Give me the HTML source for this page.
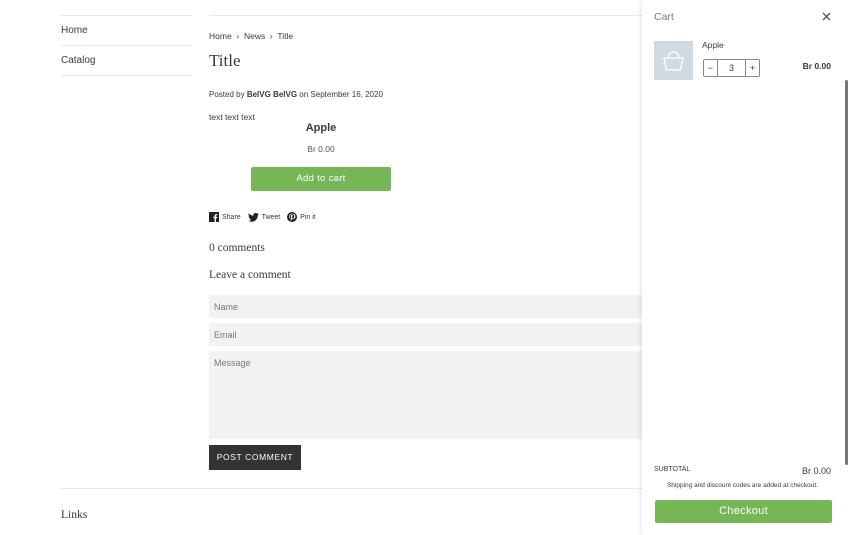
<!DOCTYPE html>
<html><head><meta charset="utf-8"><style>
*{box-sizing:border-box;margin:0;padding:0}
body{width:850px;height:535px;overflow:hidden;background:#fff;font-family:"Liberation Sans",sans-serif;color:#3a3a3a;position:relative}
.a{position:absolute}
.line{position:absolute;height:1px;background:#e8e8e8}
.serif{font-family:"Liberation Serif",serif}
.field{position:absolute;left:209px;width:433px;background:#f2f2f2;font-size:9px;color:#777;padding:7px 5px}
</style></head><body>
<div class="line" style="left:61px;top:15px;width:131px"></div>
<div class="line" style="left:209px;top:15px;width:433px"></div>
<div class="a" style="left:61px;top:25px;font-size:10px">Home</div>
<div class="line" style="left:61px;top:45px;width:131px"></div>
<div class="a" style="left:61px;top:55px;font-size:10px">Catalog</div>
<div class="line" style="left:61px;top:75px;width:131px"></div>

<div class="a" style="left:209px;top:31px;font-size:8.5px">Home &nbsp;›&nbsp; News &nbsp;›&nbsp; Title</div>
<div class="a serif" style="left:209px;top:51px;font-size:17px">Title</div>
<div class="a" style="left:209px;top:90px;font-size:8px">Posted by <b>BelVG BelVG</b> on September 16, 2020</div>
<div class="a" style="left:209px;top:112px;font-size:8.5px">text text text</div>
<div class="a" style="left:251px;top:122px;width:140px;text-align:center;font-size:11px;font-weight:bold">Apple</div>
<div class="a" style="left:251px;top:144px;width:140px;text-align:center;font-size:8.5px;color:#555">Br 0.00</div>
<div class="a" style="left:251px;top:167px;width:140px;height:24px;background:#77b657;border-radius:2px;color:#fff;font-size:9.5px;letter-spacing:.3px;text-align:center;line-height:24px">Add to cart</div>

<div class="a" style="left:209px;top:212px;font-size:7px;display:flex;align-items:center;gap:3px">
<svg width="10" height="10" viewBox="0 0 10 10"><rect width="10" height="10" fill="#222"/><path d="M7 10V6.2h1.2l.2-1.4H7V4c0-.4.1-.7.7-.7h.7V2.1C8.2 2 7.8 2 7.3 2 6.3 2 5.6 2.6 5.6 3.7v1.1H4.4v1.4h1.2V10z" fill="#fff"/></svg>Share&nbsp;&nbsp;
<svg width="11" height="9" viewBox="0 0 24 20"><path d="M24 2.4a10 10 0 0 1-2.8.8A5 5 0 0 0 23.3.4a10 10 0 0 1-3.1 1.2A4.9 4.9 0 0 0 11.8 6 14 14 0 0 1 1.7.9a4.9 4.9 0 0 0 1.5 6.6 4.9 4.9 0 0 1-2.2-.6A4.9 4.9 0 0 0 4.9 11.7a5 5 0 0 1-2.2.1 4.9 4.9 0 0 0 4.6 3.4A9.9 9.9 0 0 1 0 17.3 14 14 0 0 0 7.5 19.5c9.1 0 14-7.5 14-14v-.6A10 10 0 0 0 24 2.4z" fill="#222"/></svg>Tweet&nbsp;&nbsp;
<svg width="10" height="10" viewBox="0 0 10 10"><circle cx="5" cy="5" r="5" fill="#222"/><path d="M4.4 8.8 5 6.4c.3.4.7.6 1.2.6 1.5 0 2.3-1.4 2.3-2.8C8.5 2.8 7.3 1.6 5.4 1.6 3.2 1.6 2.1 3.1 2.1 4.5c0 .8.3 1.5 1 1.7l.2-.6c-.4-.4-.5-.8-.5-1.2 0-1.3 1-2.3 2.5-2.3 1.3 0 2 .8 2 1.9 0 1.4-.6 2.4-1.5 2.4-.5 0-.8-.4-.7-.9l.5-1.7c.1-.6-.2-1-.7-1-.6 0-1 .6-1 1.3 0 .5.2.8.2.8L3.6 8z" fill="#fff"/></svg>Pin it</div>

<div class="a serif" style="left:209px;top:242px;font-size:11.5px">0 comments</div>
<div class="a serif" style="left:209px;top:269px;font-size:11.5px">Leave a comment</div>
<div class="field" style="top:295px;height:23px">Name</div>
<div class="field" style="top:323px;height:23px">Email</div>
<div class="field" style="top:351px;height:88px">Message</div>
<div class="a" style="left:209px;top:445px;width:92px;height:25px;background:#333;color:#fff;font-size:8.5px;letter-spacing:.6px;text-align:center;line-height:25px">POST COMMENT</div>
<div class="line" style="left:61px;top:488px;width:581px"></div>
<div class="a serif" style="left:61px;top:509px;font-size:11.5px">Links</div>

<div class="a" style="left:642px;top:0;width:208px;height:535px;background:#fff;box-shadow:0 0 6px rgba(0,0,0,.15)">
<div class="a" style="left:12px;top:11px;font-size:10.5px;color:#777">Cart</div>
<svg class="a" style="left:180px;top:12px" width="9" height="9" viewBox="0 0 9 9"><path d="M1 1l7 7M8 1L1 8" stroke="#555" stroke-width="1.3"/></svg>
<div class="a" style="left:12px;top:41px;width:39px;height:39px;background:#d0dae3"></div>
<svg class="a" style="left:20px;top:49px" width="23" height="24" viewBox="0 0 23 24"><path d="M6 9a5.5 6 0 0 1 11 0M2 9h19l-2.5 12h-14z" fill="none" stroke="#fff" stroke-width="1.3"/></svg>
<div class="a" style="left:60px;top:40px;font-size:8.5px">Apple</div>
<div class="a" style="left:61px;top:59px;width:57px;height:18px;border:1px solid #888;border-radius:2px;display:flex;font-size:9px;line-height:16px;text-align:center">
<div style="width:14px;border-right:1px solid #888">−</div><div style="flex:1">3</div><div style="width:14px;border-left:1px solid #888">+</div></div>
<div class="a" style="right:19px;top:61px;font-size:8.5px;font-weight:bold">Br 0.00</div>
<div class="a" style="left:203px;top:80px;width:3px;height:385px;background:#777;border-radius:2px"></div>
<div class="a" style="left:12px;top:466px;font-size:7px">SUBTOTAL</div>
<div class="a" style="right:19px;top:466px;font-size:9px">Br 0.00</div>
<div class="a" style="left:12px;top:482px;width:177px;text-align:center;font-size:6.5px">Shipping and discount codes are added at checkout.</div>
<div class="a" style="left:13px;top:500px;width:177px;height:23px;background:#77b657;border-radius:2px;color:#fff;font-size:11px;letter-spacing:.3px;text-align:center;line-height:23px">Checkout</div>
</div>
</body></html>
